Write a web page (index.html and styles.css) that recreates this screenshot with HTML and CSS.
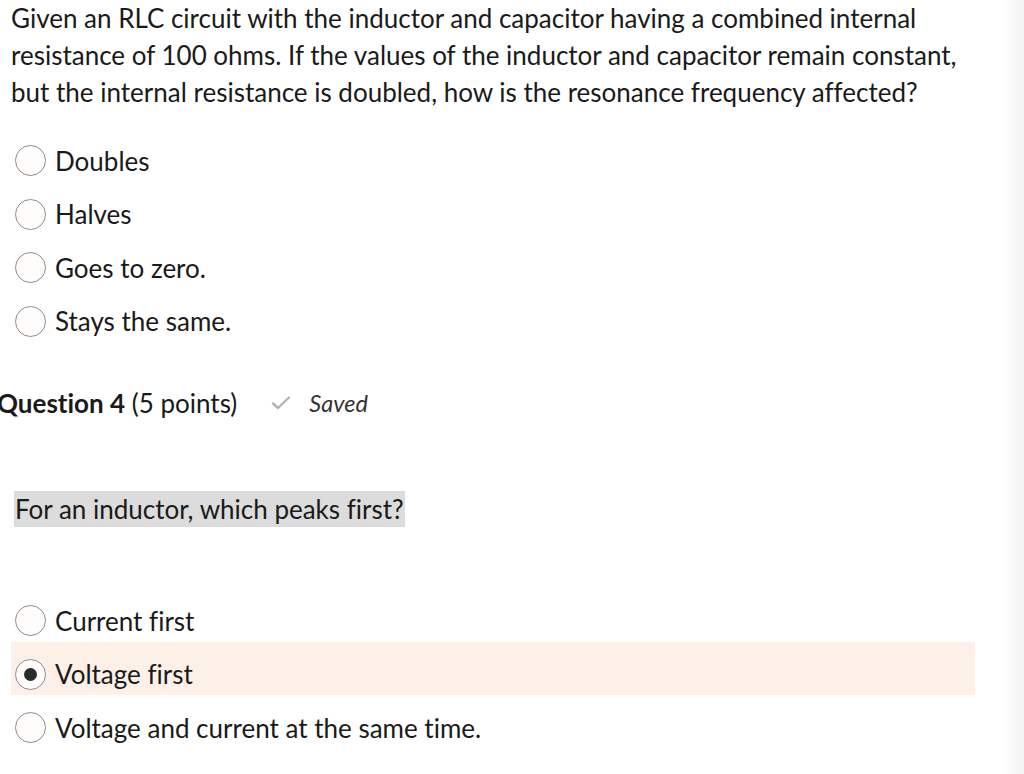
FILE: index.html
```html
<!DOCTYPE html>
<html>
<head>
<meta charset="utf-8">
<link rel="stylesheet" href="styles.css">
</head>
<body>
<div class="page">
  <p class="qtext">Given an RLC circuit with the inductor and capacitor having a combined internal resistance of 100 ohms. If the values of the inductor and capacitor remain constant, but the internal resistance is doubled, how is the resonance frequency affected?</p>
  <ul class="options first">
    <li class="opt"><span class="radio"></span><span>Doubles</span></li>
    <li class="opt"><span class="radio"></span><span>Halves</span></li>
    <li class="opt"><span class="radio"></span><span>Goes to zero.</span></li>
    <li class="opt"><span class="radio"></span><span>Stays the same.</span></li>
  </ul>
  <div class="qhead">
    <span class="qtitle"><b>Question 4</b> (5 points)</span>
    <svg class="check" width="22" height="16" viewBox="0 0 22 16"><path d="M3 8.5 L8 13 L19 2.5" fill="none" stroke="#b3b3b3" stroke-width="2.4" stroke-linecap="round" stroke-linejoin="round"/></svg>
    <span class="saved">Saved</span>
  </div>
  <p class="q2"><span class="hl">For an inductor, which peaks first?</span></p>
  <ul class="options second">
    <li class="opt"><span class="radio"></span><span>Current first</span></li>
    <li class="opt selected"><span class="radio checked"></span><span>Voltage first</span></li>
    <li class="opt"><span class="radio"></span><span>Voltage and current at the same time.</span></li>
  </ul>
</div>
<div class="edge"></div>
</body>
</html>
```
FILE: styles.css
```css
html, body {
  margin: 0;
  padding: 0;
  background: #fff;
}
body {
  font-family: Lato, "Open Sans", sans-serif;
  color: #1a1a1a;
  font-size: 26px;
  font-variant-ligatures: none;
  overflow: hidden;
}
.page {
  width: 990px;
  padding-left: 11px;
}
.qtext {
  margin: 0;
  line-height: 37px;
  width: 960px;
}
.options {
  list-style: none;
  margin: 0;
  padding: 0;
}
.options.first {
  margin-top: 17px;
}
.opt {
  display: flex;
  align-items: center;
  gap: 9px;
  height: 41.5px;
  padding-top: 12px;
  padding-left: 4px;
  width: 960px;
}
.opt.selected {
  background: #fcf0e8;
}
.radio {
  width: 29px;
  height: 29px;
  border: 1.5px solid #8c8c8c;
  border-radius: 50%;
  background: #fffdfb;
  flex: none;
  display: flex;
  align-items: center;
  justify-content: center;
}
.radio.checked::after {
  content: "";
  width: 13px;
  height: 13px;
  border-radius: 50%;
  background: #2b2b2b;
}
.qhead {
  display: flex;
  align-items: center;
  margin-left: -14px;
  margin-top: 44px;
  height: 34px;
}
.check {
  margin-left: 33px;
}
.saved {
  font-style: italic;
  font-size: 23.5px;
  margin-left: 17px;
  color: #333;
}
.q2 {
  margin: 71px 0 0 3px;
  line-height: 37px;
}
.hl {
  background: #dcdcdc;
  padding: 2px 1px 2px 1px;
}
.options.second {
  margin-top: 60px;
}
.edge {
  position: fixed;
  top: 0;
  right: 0;
  width: 22px;
  height: 100%;
  background: linear-gradient(to right, rgba(240,240,240,0), rgba(238,238,238,0.7));
}
```
